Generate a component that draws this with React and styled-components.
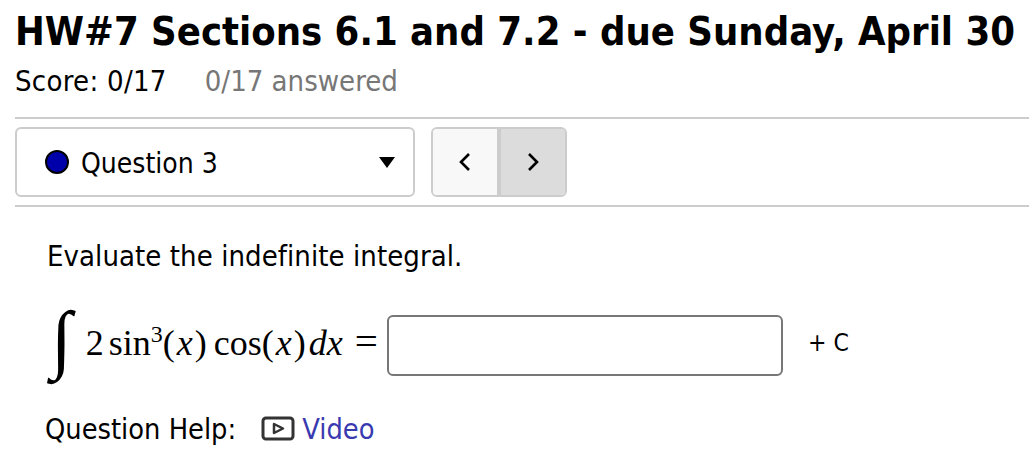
import React from "react";
import styled, { createGlobalStyle } from "styled-components";

const GlobalStyle = createGlobalStyle`
  html, body {
    margin: 0;
    padding: 0;
    background: #fff;
    overflow: hidden;
  }
  body {
    font-family: "DejaVu Sans", sans-serif;
    font-stretch: condensed;
    color: #000;
  }
`;

const Page = styled.div`
  width: 1029px;
  height: 453px;
  padding-left: 15px;
  box-sizing: border-box;
  overflow: hidden;
`;

const Title = styled.h1`
  margin: 0;
  padding-top: 9px;
  height: 45px;
  font-size: 39.6px;
  line-height: 45px;
  font-weight: 700;
  white-space: nowrap;
`;

const ScoreRow = styled.div`
  display: flex;
  gap: 41px;
  margin-top: 5px;
  height: 58px;
  font-size: 29px;
  line-height: 44px;
`;

const Score = styled.span`
  letter-spacing: 0.28px;
  margin-right: -3px;
`;

const Answered = styled.span`
  color: #777;
`;

const NavBar = styled.div`
  display: flex;
  gap: 16px;
  align-items: center;
  height: 86px;
  border-top: 2px solid #ccc;
  border-bottom: 2px solid #ccc;
`;

const Select = styled.div`
  width: 400px;
  height: 70px;
  box-sizing: border-box;
  border: 2px solid #ccc;
  border-radius: 6px;
  display: flex;
  align-items: center;
  padding: 0 18px 0 28px;
  font-size: 28px;
`;

const SelectLabel = styled.span`
  margin-top: 2px;
`;

const Dot = styled.span`
  width: 24px;
  height: 24px;
  box-sizing: border-box;
  border-radius: 50%;
  border: 2px solid #000;
  background: #0000aa;
  margin-right: 12px;
`;

const Caret = styled.span`
  margin-left: auto;
  width: 0;
  height: 0;
  border-left: 8px solid transparent;
  border-right: 8px solid transparent;
  border-top: 11px solid #000;
`;

const Pager = styled.div`
  display: flex;
  width: 136px;
  height: 70px;
  box-sizing: border-box;
  border: 2px solid #ccc;
  border-radius: 6px;
  overflow: hidden;
`;

const PageButton = styled.div`
  flex: 1;
  display: flex;
  align-items: center;
  justify-content: center;
  background: ${(p) => (p.$active ? "#dcdcdc" : "#f8f8f8")};
  border-left: ${(p) => (p.$active ? "4px solid #ccc" : "0")};
`;

const Question = styled.div`
  padding: 31px 0 0 32px;
`;

const Prompt = styled.p`
  margin: 0;
  font-size: 29px;
  line-height: 36px;
  letter-spacing: 0.06px;
`;

const MathRow = styled.div`
  display: flex;
  align-items: center;
  height: 96px;
  margin-top: 23px;
`;

const Formula = styled.div`
  display: flex;
  align-items: center;
  width: 340px;
  padding-left: 4px;
  box-sizing: border-box;
  font-family: "Liberation Serif", serif;
  font-stretch: normal;
  font-size: 36px;
  white-space: nowrap;
`;

const Integral = styled.span`
  font-size: 76px;
  line-height: 80px;
  margin: 0 14px 14px 0;
`;

const Expr = styled.span`
  display: inline-block;
  margin-bottom: 4px;
`;

const Var = styled.i`
  padding: 0 2px;
`;

const Sup = styled.sup`
  font-size: 24px;
  line-height: 0;
`;

const Gap = styled.span`
  display: inline-block;
  width: ${(p) => p.$w}px;
`;

const Equals = styled.span`
  font-size: 41px;
  line-height: 0;
`;

const AnswerBox = styled.div`
  width: 396px;
  height: 61px;
  box-sizing: border-box;
  border: 2px solid #777;
  border-radius: 6px;
`;

const PlusC = styled.span`
  margin: -6px 0 0 25px;
  font-size: 24.5px;
`;

const Help = styled.div`
  display: flex;
  align-items: center;
  margin: 11px 0 0 -2px;
  height: 50px;
  font-size: 28.7px;
`;

const VideoLink = styled.a`
  color: #3a3ab0;
  margin-left: 7px;
`;

const VideoIcon = styled.svg`
  width: 34px;
  height: 26px;
  margin-left: 25px;
`;

const Chevron = ({ left }) => (
  <svg width="16" height="22" viewBox="0 0 16 22" fill="none" stroke="#000" strokeWidth="2.6">
    <path d={left ? "M12 3 L4 11 L12 19" : "M4 3 L12 11 L4 19"} />
  </svg>
);

const App = () => {
  return (
    <Page>
      <GlobalStyle />
      <Title>HW#7 Sections 6.1 and 7.2 - due Sunday, April 30</Title>
      <ScoreRow>
        <Score>Score: 0/17</Score>
        <Answered>0/17 answered</Answered>
      </ScoreRow>
      <NavBar>
        <Select>
          <Dot />
          <SelectLabel>Question 3</SelectLabel>
          <Caret />
        </Select>
        <Pager>
          <PageButton>
            <Chevron left />
          </PageButton>
          <PageButton $active>
            <Chevron />
          </PageButton>
        </Pager>
      </NavBar>
      <Question>
        <Prompt>Evaluate the indefinite integral.</Prompt>
        <MathRow>
          <Formula>
            <Integral>∫</Integral>
            <Expr>
              2<Gap $w={5} />sin<Sup>3</Sup>(<Var>x</Var>)<Gap $w={7} />cos(<Var>x</Var>)<Gap $w={1} /><Var>dx</Var>
              <Gap $w={10} /><Equals>=</Equals>
            </Expr>
          </Formula>
          <AnswerBox />
          <PlusC>+ C</PlusC>
        </MathRow>
        <Help>
          Question Help:
          <VideoIcon viewBox="0 0 34 26" fill="none">
            <rect x="2" y="2" width="30" height="21" rx="3" stroke="#333" strokeWidth="3" />
            <path d="M13 8 L22 12.5 L13 17 Z" stroke="#333" strokeWidth="2.5" strokeLinejoin="round" />
          </VideoIcon>
          <VideoLink>Video</VideoLink>
        </Help>
      </Question>
    </Page>
  );
};

export default App;
